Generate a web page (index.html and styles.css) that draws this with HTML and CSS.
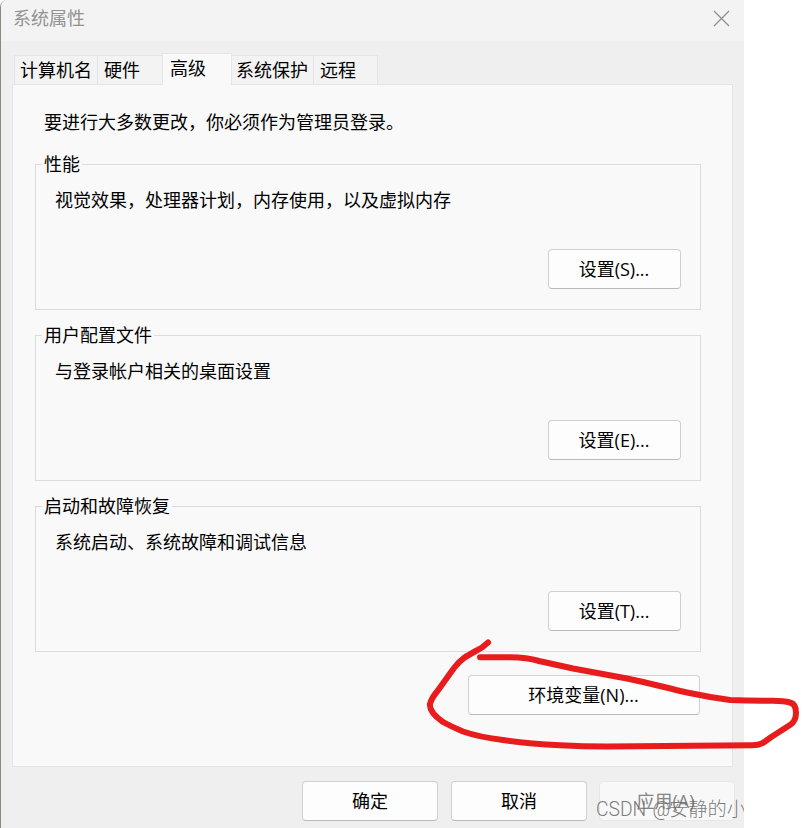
FILE: index.html
```html
<!DOCTYPE html>
<html lang="zh-CN">
<head>
<meta charset="utf-8">
<title>系统属性</title>
<link rel="stylesheet" href="styles.css">
</head>
<body>
<main class="window">
  <header class="titlebar">
    <h1 class="title">系统属性</h1>
    <svg class="close" width="17" height="17" viewBox="0 0 17 17"><path d="M1 1 L16 16 M16 1 L1 16"/></svg>
  </header>
  <nav class="tabs">
    <span class="tab tab-name">计算机名</span>
    <span class="tab tab-hardware">硬件</span>
    <span class="tab tab-active">高级</span>
    <span class="tab tab-protection">系统保护</span>
    <span class="tab tab-remote">远程</span>
  </nav>
  <section class="panel">
    <p class="notice">要进行大多数更改，你必须作为管理员登录。</p>
    <section class="group">
      <h2 class="legend"><span>性能</span></h2>
      <p class="desc">视觉效果，处理器计划，内存使用，以及虚拟内存</p>
      <button class="btn btn-settings">设置(S)...</button>
    </section>
    <section class="group">
      <h2 class="legend"><span>用户配置文件</span></h2>
      <p class="desc">与登录帐户相关的桌面设置</p>
      <button class="btn btn-settings">设置(E)...</button>
    </section>
    <section class="group">
      <h2 class="legend"><span>启动和故障恢复</span></h2>
      <p class="desc">系统启动、系统故障和调试信息</p>
      <button class="btn btn-settings">设置(T)...</button>
    </section>
    <button class="btn btn-env">环境变量(N)...</button>
  </section>
  <footer class="actions">
    <button class="btn">确定</button>
    <button class="btn">取消</button>
    <button class="btn btn-apply" disabled>应用(A)</button>
  </footer>
  <div class="watermark"><span class="brand">CSDN @</span>安静的小</div>
</main>
<svg class="scribble" width="802" height="828" viewBox="0 0 802 828"><path d="M488 642.5 L482 647.5 C476 651 469 654.500 464 658 Q459 661.500 454 668 L437.500 691 Q431.500 698 430 704 C429 711 436 717 443 722 Q452 727 463 731.500 C476 736 490 738.500 503 740 C522 743 541 744.500 560 745.200 Q583 746.500 607 746.500 L752 745.300 Q760 745.300 765 741.500 L772 736.500 L790 725 Q796 721 796 713 Q796 704 790 702.500 Q784 700.800 773 700.700 Q750 701 730 700 Q708 697 687 692.500 C667 688 647 682.500 627 678.500 L573 668.500 L539 661 Q527 657.500 510 657.300 L480 657.300"/></svg>
</body>
</html>
```
FILE: styles.css
```css
* { box-sizing: border-box; }

body {
  margin: 0;
  width: 802px;
  height: 828px;
  overflow: hidden;
  background: #fff;
  color: #000;
  font: 18px/26px "Open Sans", "Noto Sans CJK SC", sans-serif;
}

h1, h2, p { margin: 0; font: inherit; }

.window {
  position: relative;
  width: 744px;
  height: 828px;
  overflow: hidden;
  background: #efefef;
  border-left: 1px solid #8b8984;
  border-top-left-radius: 7px;
}

.titlebar {
  display: flex;
  justify-content: space-between;
  height: 41px;
  padding: 5px 14px 0 12px;
  background: #f3f3f3;
}

.title { color: #929292; }

.close { margin-top: 5px; fill: none; stroke: #8d8f8f; stroke-width: 1.3; }

.tabs {
  display: flex;
  align-items: flex-end;
  height: 43px;
  padding-left: 13px;
}

.tab {
  height: 29px;
  padding: 1px 0 0 6px;
  border: 1px solid #e5e5e5;
  border-width: 1px 0 0 1px;
  background: #f3f3f3;
  white-space: nowrap;
}

.tab-name { width: 83px; padding-left: 5px; }
.tab-hardware { width: 65px; }
.tab-active {
  z-index: 1;
  width: 70px;
  height: 32px;
  margin-bottom: -1px;
  padding: 1px 0 0 7px;
  border-right-width: 1px;
  background: #f9f9f9;
}
.tab-protection { width: 81px; padding-left: 4px; border-left: 0; }
.tab-remote { width: 65px; border-right-width: 1px; }

.panel {
  display: flex;
  flex-direction: column;
  width: 721px;
  height: 683px;
  margin-left: 11px;
  padding: 24px 31px 0 22px;
  background: #f9f9f9;
  border: 1px solid #e5e5e5;
}

.notice { margin: 0 0 29px 9px; }

.group {
  display: flex;
  flex-direction: column;
  flex: none;
  height: 146px;
  margin-bottom: 25px;
  border: 1px solid #dcdcdc;
}

.legend { height: 26px; margin: -14px 0 0 6px; }
.legend span {
  display: inline-block;
  padding: 0 2px;
  background: #f9f9f9;
}

.desc { margin: 10px 0 0 19px; }

.btn {
  width: 136px;
  height: 40px;
  padding: 0 0 1px;
  border: 1px solid #d0d0d0;
  border-bottom-color: #bababa;
  border-radius: 4px;
  background: #fdfdfd;
  color: #000;
  font: inherit;
}

.btn-settings { align-self: flex-end; width: 133px; margin: 36px 19px 0 0; padding-right: 1px; }
.btn-env { align-self: flex-end; width: 232px; margin: -2px 1px 0 0; padding-right: 1px; }
.btn-apply { margin-left: -1px; padding-right: 3px; }

.actions {
  display: flex;
  gap: 13px;
  padding: 14px 0 0 301px;
}

.btn:disabled {
  border-color: #e7e7e7;
  background: #f8f8f8;
  color: #858585;
}

.watermark {
  position: absolute;
  left: 595px;
  top: 797px;
  color: rgba(100, 100, 100, .85);
  font: 300 19.3px/26px Roboto, "Noto Sans CJK SC", sans-serif;
  white-space: nowrap;
}

.brand { display: inline-block; width: 73px; word-spacing: 1.5px; }

.scribble {
  position: absolute;
  left: 0;
  top: 0;
  fill: none;
  stroke: #e81c1c;
  stroke-width: 6;
  stroke-linecap: round;
  stroke-linejoin: round;
}
```
